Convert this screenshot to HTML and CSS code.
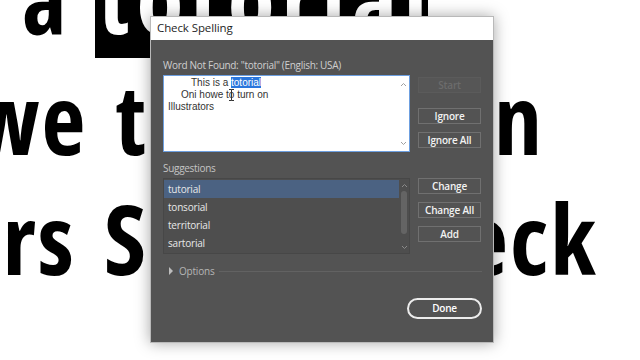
FILE: index.html
```html
<!DOCTYPE html>
<html>
<head>
<meta charset="utf-8">
<title>Check Spelling</title>
<link rel="stylesheet" href="styles.css">
</head>
<body>
<div class="page">
    <div class="bigtext">
        <div class="line one"><span class="word-a">a</span><span class="hl">totorial</span></div>
        <div class="line"><span class="left">on how we t</span><span class="right two">n</span></div>
        <div class="line"><span class="left">Illustrators S</span><span class="right three">eck</span></div>
    </div>

    <div class="dialog">
        <div class="titlebar">Check Spelling</div>
        <div class="body">
            <div class="label">Word Not Found: "totorial" (English: USA)</div>
            <div class="row first">
                <div class="textbox">
                    <div class="tb-line i1">This is a <span class="sel">totorial</span></div>
                    <div class="tb-line i2">Oni howe to turn on</div>
                    <div class="tb-line i3">Illustrators</div>
                    <svg class="ibeam" width="7" height="12" viewBox="0 0 7 12"><path d="M1 0.5h2.5M3.5 0.5h2.5M3.5 0.5v11M1 11.5h2.5M3.5 11.5h2.5" stroke="#333" stroke-width="1" fill="none"/></svg>
                    <div class="tb-scroll">
                        <svg width="7" height="5" viewBox="0 0 7 5"><path d="M1 4l2.5-2.5L6 4" stroke="#a0a0a0" fill="none"/></svg>
                        <svg width="7" height="5" viewBox="0 0 7 5"><path d="M1 1l2.5 2.5L6 1" stroke="#a0a0a0" fill="none"/></svg>
                    </div>
                </div>
                <div class="btns">
                    <div class="btn disabled">Start</div>
                    <div class="btn gap-big">Ignore</div>
                    <div class="btn">Ignore All</div>
                </div>
            </div>

            <div class="label second">Suggestions</div>
            <div class="row">
                <div class="list">
                    <div class="items">
                        <div class="item selected">tutorial</div>
                        <div class="item">tonsorial</div>
                        <div class="item">territorial</div>
                        <div class="item">sartorial</div>
                    </div>
                    <div class="list-scroll">
                        <svg width="7" height="5" viewBox="0 0 7 5"><path d="M1 4l2.5-2.5L6 4" stroke="#8a8a8a" fill="none"/></svg>
                        <div class="thumb"></div>
                        <svg width="7" height="5" viewBox="0 0 7 5"><path d="M1 1l2.5 2.5L6 1" stroke="#8a8a8a" fill="none"/></svg>
                    </div>
                </div>
                <div class="btns">
                    <div class="btn">Change</div>
                    <div class="btn">Change All</div>
                    <div class="btn">Add</div>
                </div>
            </div>

            <div class="options">
                <span class="tri"></span>
                <span class="opt-text">Options</span>
                <span class="rule"></span>
            </div>

            <div class="footer">
                <div class="done">Done</div>
            </div>
        </div>
    </div>
</div>
</body>
</html>
```

FILE: styles.css
```css
body {
    margin: 0;
    background: #ffffff;
    overflow: hidden;
}

.page {
    position: relative;
    width: 640px;
    height: 360px;
    overflow: hidden;
}

/* big letters behind the dialog */
.bigtext {
    margin-top: -63px;
    font-family: "Open Sans", sans-serif;
    font-weight: 700;
    font-stretch: 75%;
    font-size: 96px;
    line-height: 120px;
    color: #000;
    word-spacing: 9px;
    letter-spacing: 2px;
}

.line {
    display: flex;
    white-space: nowrap;
}

.word-a {
    margin-left: 22px;
    width: 73px;
}

.hl {
    display: inline-block;
    box-sizing: border-box;
    width: 333px;
    height: 123px;
    margin-top: -2px;
    padding: 2px 0 0 4px;
    background: #000;
    color: #fff;
    letter-spacing: 7px;
    overflow: hidden;
}

.left {
    width: 148px;
    display: flex;
    justify-content: flex-end;
    flex-shrink: 0;
}

.right.two {
    margin-left: 346px;
}

.right.three {
    margin-left: 316px;
}

/* dialog */
.dialog {
    position: absolute;
    left: 150px;
    top: 16px;
    width: 342px;
    height: 325px;
    border: 1px solid #b9b9b9;
    background: #535353;
    box-shadow: 0 0 14px rgba(0, 0, 0, 0.35);
    font-family: "Open Sans", sans-serif;
}

.titlebar {
    height: 23px;
    background: #ffffff;
    color: #1e1e1e;
    font-size: 11.5px;
    line-height: 22px;
    padding-left: 6px;
    letter-spacing: -0.1px;
}

.body {
    padding: 18px 11px 0 12px;
}

.label {
    font-size: 10px;
    letter-spacing: -0.3px;
    line-height: 14px;
    color: #cfcfcf;
    margin-bottom: 3px;
}

.label.second {
    margin-top: 9px;
    color: #c4c4c4;
}

.row {
    display: flex;
    gap: 8px;
}

.textbox {
    position: relative;
    width: 245px;
    height: 74px;
    border: 1px solid #6d9fe0;
    background: #ffffff;
    font-family: "Liberation Sans", sans-serif;
    font-size: 10px;
    color: #333;
    padding-top: 1px;
}

.tb-line {
    line-height: 12px;
    height: 12px;
}

.i1 { padding-left: 27px; }
.i2 { padding-left: 17px; }
.i3 { padding-left: 4px; }

.sel {
    background: #2a76dc;
    color: #ffffff;
}

.ibeam {
    position: absolute;
    left: 64px;
    top: 13px;
}

.tb-scroll {
    position: absolute;
    right: 2px;
    top: 6px;
    bottom: 5px;
    display: flex;
    flex-direction: column;
    justify-content: space-between;
}

.btns {
    width: 63px;
    display: flex;
    flex-direction: column;
    gap: 8px;
}

.row.first .btns {
    margin-top: 2px;
}

.btn {
    height: 14px;
    border: 1px solid #707070;
    color: #f2f2f2;
    font-size: 10px;
    letter-spacing: -0.2px;
    font-weight: 600;
    line-height: 14px;
    text-align: center;
}

.btn.disabled {
    border-color: #5b5b5b;
    background: #565656;
    color: #6c6c6c;
}

.btn.gap-big {
    margin-top: 7px;
}

.list {
    display: flex;
    width: 245px;
    height: 74px;
    border: 1px solid #474747;
    background: #4e4e4e;
}

.items {
    flex: 1;
    padding-top: 1px;
}

.item {
    height: 18px;
    line-height: 18px;
    padding-left: 4px;
    font-size: 10px;
    letter-spacing: -0.2px;
    color: #e8e8e8;
}

.item.selected {
    background: #4b6282;
}

.list-scroll {
    width: 10px;
    display: flex;
    flex-direction: column;
    align-items: center;
    padding: 4px 0 3px;
    gap: 3px;
}

.thumb {
    width: 6px;
    flex: 1;
    margin-bottom: 8px;
    background: #646464;
    border-radius: 3px;
}

.options {
    display: flex;
    align-items: center;
    margin-top: 10px;
    height: 14px;
    padding-left: 6px;
}

.tri {
    width: 0;
    height: 0;
    border-top: 4px solid transparent;
    border-bottom: 4px solid transparent;
    border-left: 4px solid #bdbdbd;
}

.opt-text {
    margin-left: 6px;
    font-size: 10px;
    letter-spacing: -0.2px;
    color: #b5b5b5;
}

.rule {
    flex: 1;
    height: 1px;
    margin-left: 4px;
    background: #626262;
}

.footer {
    display: flex;
    justify-content: flex-end;
    margin-top: 20px;
}

.done {
    width: 71px;
    height: 17px;
    border: 2px solid #ececec;
    border-radius: 11px;
    color: #ffffff;
    font-size: 10px;
    letter-spacing: -0.2px;
    font-weight: 600;
    line-height: 17px;
    text-align: center;
}
```
